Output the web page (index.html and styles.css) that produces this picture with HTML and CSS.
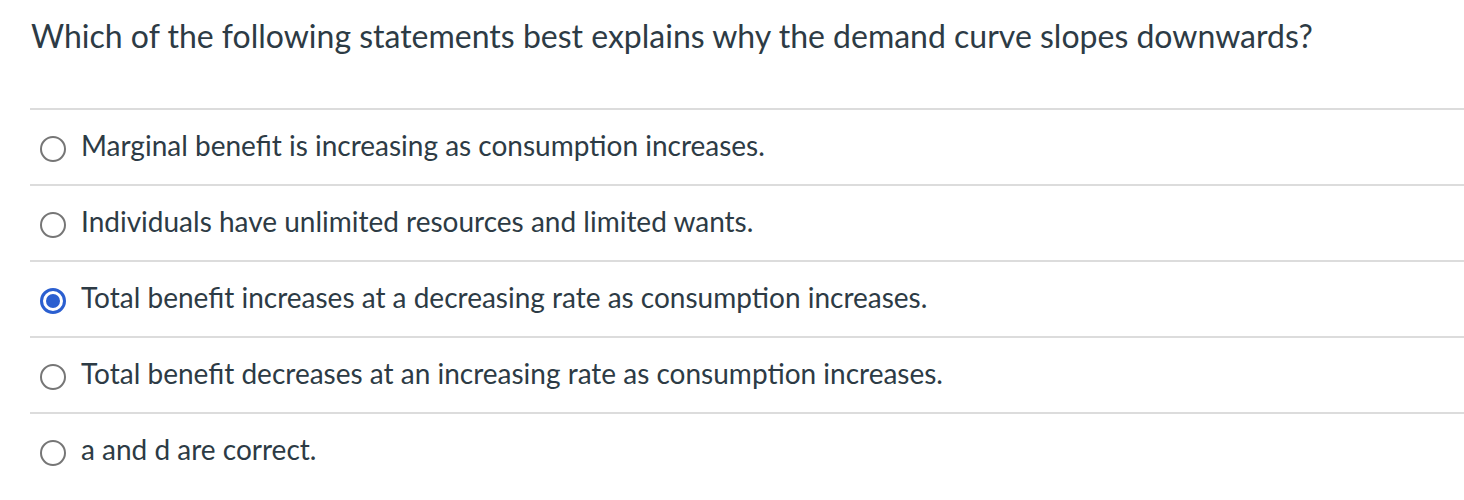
FILE: index.html
```html
<!DOCTYPE html>
<html>
<head>
<meta charset="utf-8">
<link rel="stylesheet" href="styles.css">
</head>
<body>
<div class="quiz">
  <p class="question">Which of the following statements best explains why the demand curve slopes downwards?</p>
  <ul class="answers">
    <li class="answer"><span class="radio"></span><span class="label">Marginal benefit is increasing as consumption increases.</span></li>
    <li class="answer"><span class="radio"></span><span class="label">Individuals have unlimited resources and limited wants.</span></li>
    <li class="answer"><span class="radio checked"></span><span class="label">Total benefit increases at a decreasing rate as consumption increases.</span></li>
    <li class="answer"><span class="radio"></span><span class="label">Total benefit decreases at an increasing rate as consumption increases.</span></li>
    <li class="answer"><span class="radio"></span><span class="label">a and d are correct.</span></li>
  </ul>
</div>
</body>
</html>
```
FILE: styles.css
```css
html, body {
  margin: 0;
  padding: 0;
  background: #fff;
}
body {
  font-family: Lato, "Noto Sans", sans-serif;
  color: #2d3b45;
}
.quiz {
  padding-left: 30px;
}
.question {
  margin: 0;
  padding: 16px 0 0 1px;
  height: 108px;
  box-sizing: border-box;
  font-size: 32px;
  line-height: 40px;
}
.answers {
  list-style: none;
  margin: 0;
  padding: 0;
}
.answer {
  display: flex;
  align-items: center;
  gap: 15px;
  height: 76px;
  box-sizing: border-box;
  border-top: 2px solid #dcdcdc;
  padding-left: 10px;
  font-size: 28px;
}
.radio {
  flex: none;
  width: 26px;
  height: 26px;
  margin-top: 3px;
  box-sizing: border-box;
  border: 2px solid #767676;
  border-radius: 50%;
  background: #fff;
  position: relative;
}
.radio.checked {
  border: 3px solid #2b5fd0;
}
.radio.checked::after {
  content: "";
  position: absolute;
  left: 3px;
  top: 3px;
  width: 14px;
  height: 14px;
  border-radius: 50%;
  background: #2b5fd0;
}
.label {
  line-height: 34px;
  padding-bottom: 5px;
}
```
